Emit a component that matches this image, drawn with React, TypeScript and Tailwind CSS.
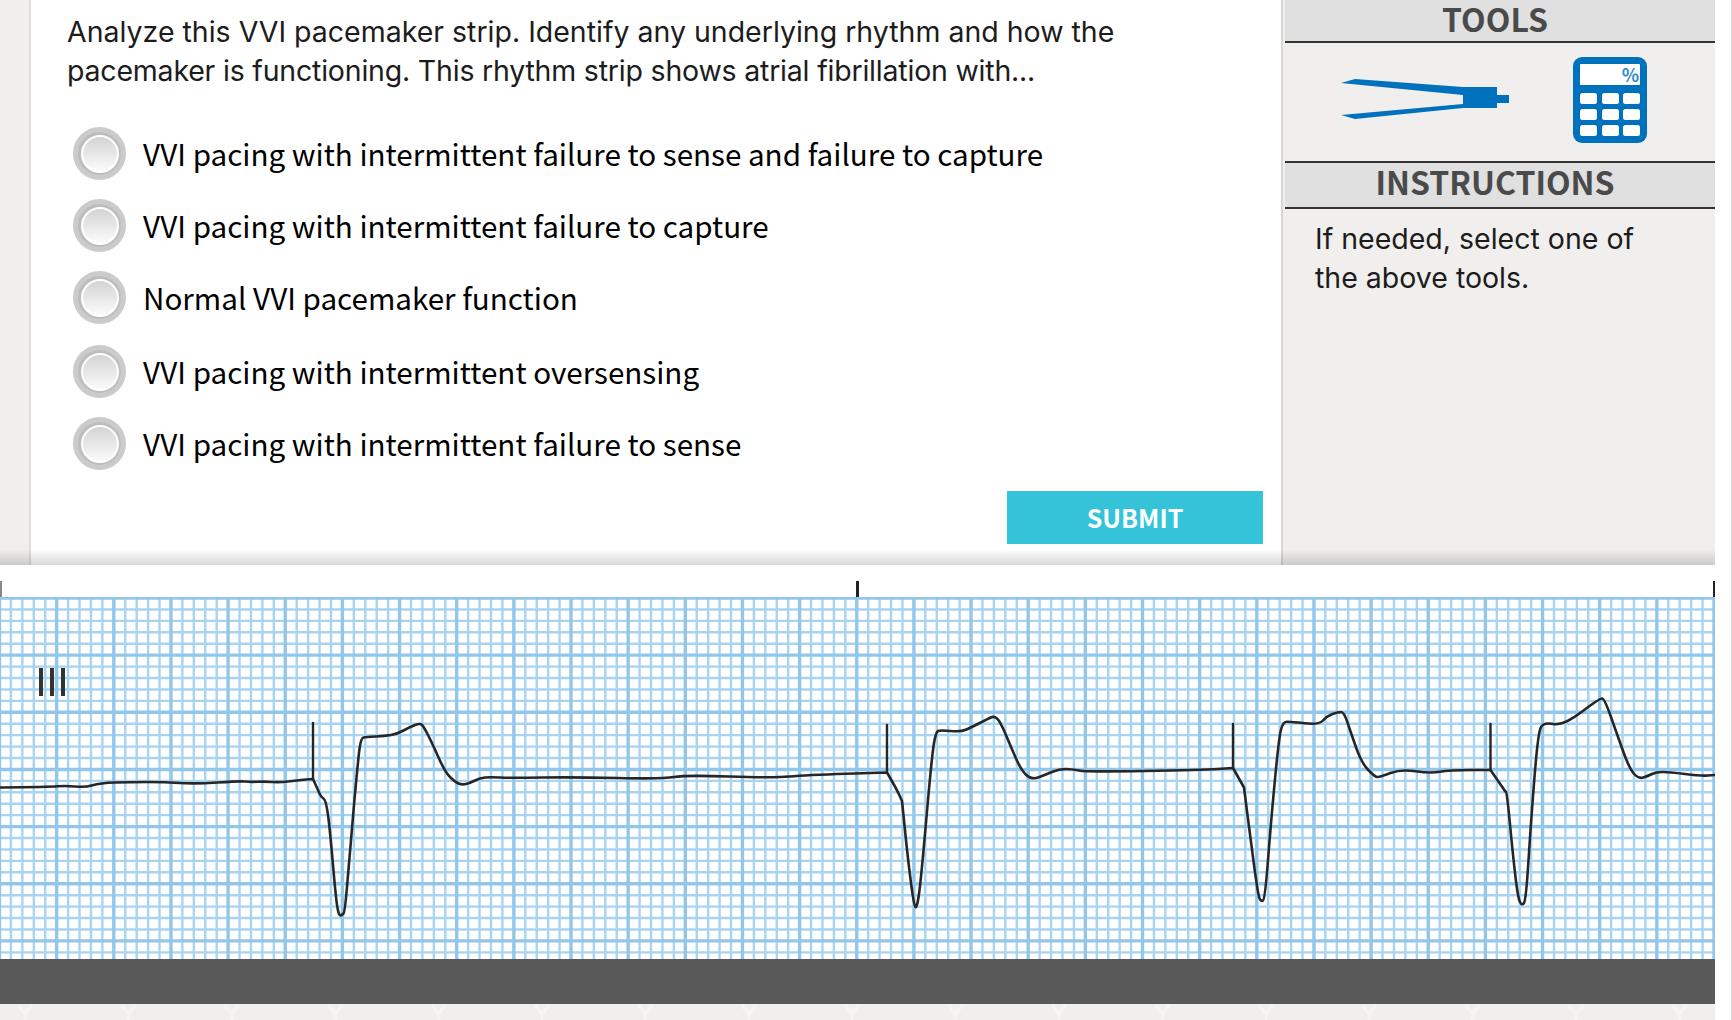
import React from "react";

const OPTIONS = [
  "VVI pacing with intermittent failure to sense and failure to capture",
  "VVI pacing with intermittent failure to capture",
  "Normal VVI pacemaker function",
  "VVI pacing with intermittent oversensing",
  "VVI pacing with intermittent failure to sense",
];

const TRACE: [number, number][] = [
  [0,787.5],[50,787],[65,785.5],[85,787.5],[100,783],[130,782],[165,782],[195,784],[240,781],[250,782],[265,781.5],[280,782.5],[300,780],[313,779],[313,779],
  [318,790],[321,797],[326,800],[330,830],[336,900],[339,916],[342,915],[345,912],[350,850],[358,760],[361,738],[366,737],[385,736],[397,734],[410,727],[420,723],[424,727],[433,745],[445,772],[455,782],[462,785],[470,783],[480,778],[490,777],[510,778],[574,777],[663,779],[685,775],[773,778],[806,775],[887,772.5],[887,772.5],
  [897,790],[902,801],[902,801],[908,860],[914,906],[917,908],[921,880],[932,754],[936,732],[940,730],[961,732],[972,727],[987.5,719],[994,716],[1000,721],[1011,747],[1021,770],[1031.5,780],[1046,774.5],[1059,769],[1072,769],[1086,772],[1202,770],[1233,768],[1233,768],
  [1244,787.5],[1244,787.5],[1250,835],[1258,894.6],[1261,902],[1265,899],[1271,821],[1279,737],[1283,722],[1290,721.6],[1319,725],[1327,716],[1338,712],[1344,712],[1351,733],[1361.5,763],[1375,777],[1380,777],[1401,769],[1430.5,773.5],[1449,770],[1490.5,770],[1490.5,770],
  [1505,791],[1505,791],[1507,793],[1513,856],[1518,898],[1522,906],[1526,900],[1531,821],[1538,733],[1543.5,722],[1563,726],[1600,698],[1604.5,699],[1616,731],[1629,768],[1638.5,779],[1648,776],[1656,772],[1669,772],[1701,776],[1715,775],
];

const STRIP_TOP = 597;

function smoothPath(pts: [number, number][]) {
  const p = pts.map(([x, y]) => [x, y - STRIP_TOP]);
  let d = `M${p[0][0]} ${p[0][1]}`;
  for (let i = 1; i < p.length - 1; i++) {
    const mx = (p[i][0] + p[i + 1][0]) / 2;
    const my = (p[i][1] + p[i + 1][1]) / 2;
    d += `Q${p[i][0]} ${p[i][1]} ${mx} ${my}`;
  }
  const last = p[p.length - 1];
  return `${d}L${last[0]} ${last[1]}`;
}

function Radio() {
  return (
    <div className="flex h-[53px] w-[53px] shrink-0 items-center justify-center rounded-full bg-[#cbcbcb]">
      <div className="flex h-[43px] w-[43px] items-center justify-center rounded-full bg-[#bdbdbd]">
        <div className="h-[38px] w-[38px] rounded-full border-2 border-white bg-linear-to-b from-[#d4d4d4] to-[#fbfbfb]" />
      </div>
    </div>
  );
}

function Caliper() {
  return (
    <svg width="168" height="42" viewBox="0 0 168 42" className="shrink-0">
      <path
        d="M0 4 L14 0 L122 8 L156 8 L156 16 L168 16 L168 24 L156 24 L156 29 L122 29 L14 40 L0 36 L122 25 L122 16 Z"
        fill="#0071bc"
      />
    </svg>
  );
}

function Calculator() {
  const cols = [7, 29, 50];
  const rows = [36, 52, 68];
  return (
    <svg width="74" height="86" viewBox="0 0 74 86" className="shrink-0">
      <rect width="74" height="86" rx="9" fill="#0071bc" />
      <rect x="7" y="7" width="60" height="21" rx="1" fill="#fff" />
      <text x="66" y="25" textAnchor="end" fontSize="18" fontWeight="700" fill="#2f8ccb" fontFamily="'Noto Sans CJK SC', sans-serif">%</text>
      {rows.map((y) =>
        cols.map((x) => <rect key={`${x}-${y}`} x={x} y={y} width="17" height="11" rx="2.5" fill="#fff" />)
      )}
    </svg>
  );
}

const STEP = 57.15 / 5;

function gridPath(width: number, height: number, major: boolean) {
  let d = "";
  for (let i = 0; i * STEP <= width; i++) {
    if ((i % 5 === 0) === major) d += `M${(i * STEP - 0.5).toFixed(2)} 0V${height}`;
  }
  for (let i = 0; i * STEP <= height; i++) {
    if ((i % 5 === 0) === major) d += `M0 ${(i * STEP + 1).toFixed(2)}H${width}`;
  }
  return d;
}

function Grid() {
  const height = 362;
  const width = 1715;
  return (
    <svg width={width} height={height} viewBox={`0 0 ${width} ${height}`} className="block">
      <rect width={width} height={height} fill="#fff" />
      <path d={gridPath(width, height, false)} stroke="#a9d4f1" strokeWidth="2.4" fill="none" />
      <path d={gridPath(width, height, true)} stroke="#93c7ea" strokeWidth="3.4" fill="none" />
      <rect x={width - 2} width="2" height={height} fill="#93c7ea" />
      {[39, 50, 61].map((x) => (
        <rect key={x} x={x} y={71} width="4" height="28" fill="#333" />
      ))}
      <g fill="none" stroke="#262626" strokeLinejoin="round" strokeLinecap="round">
        <path strokeWidth="2.6" d={smoothPath(TRACE)} />
        <path strokeWidth="2.4" d={`M313 ${723 - STRIP_TOP}V${779 - STRIP_TOP}M887 ${725 - STRIP_TOP}V${772 - STRIP_TOP}M1233 ${724 - STRIP_TOP}V${768 - STRIP_TOP}M1490.5 ${724 - STRIP_TOP}V${770 - STRIP_TOP}`} />
      </g>
    </svg>
  );
}

function Footer() {
  return (
    <svg width="1715" height="16" viewBox="0 0 1715 16" className="block">
      <defs>
        <pattern id="vee" width="103.4" height="16" patternUnits="userSpaceOnUse">
          <path d="M18 1L25 10V16M32 1L25 10" stroke="#f6f5f3" strokeWidth="3" fill="none" />
        </pattern>
      </defs>
      <rect width="1715" height="16" fill="#f0efed" />
      <rect width="1715" height="16" fill="url(#vee)" />
    </svg>
  );
}

const QUESTION = "font-['Inter','Liberation_Sans',sans-serif] text-[#1c1c1c]";
const SOURCE = "font-['Noto_Sans_CJK_SC','Noto_Sans',sans-serif]";

export default function App() {
  return (
    <div className="flex h-[1020px] w-[1732px] overflow-hidden bg-white">
      <div className="flex w-[1715px] shrink-0 flex-col">
        <div className="relative flex h-[565px] shrink-0">
          <div className="w-[31px] shrink-0 border-r-2 border-[#dedddb] bg-[#f0efed]" />
          <div className="w-[1250px] shrink-0 pl-[36px] pr-[18px] pt-[12px]">
            <p className={`${QUESTION} w-[1100px] text-[28.5px] leading-[39px]`}>
              Analyze this VVI pacemaker strip. Identify any underlying rhythm and how the{" "}
              <span className="tracking-[-0.2px]">pacemaker is functioning. This rhythm strip shows atrial fibrillation with...</span>
            </p>
            <div className="mt-[37px] flex flex-col gap-[19px]">
              {OPTIONS.map((o, i) => (
                <div key={o} className={`flex items-center gap-[17px] pl-[6px] ${i === 3 ? "mt-[2px]" : ""}`}>
                  <Radio />
                  <span className={`${SOURCE} text-[29.6px] leading-[40px] text-black`}>{o}</span>
                </div>
              ))}
            </div>
            <div className="mt-[21px] flex justify-end">
              <button className={`${SOURCE} flex h-[53px] w-[256px] items-center justify-center bg-[#34c3d9] text-[25px] font-bold text-white`}>
                SUBMIT
              </button>
            </div>
          </div>
          <aside className="flex w-[434px] shrink-0 flex-col border-l-2 border-[#d8d7d5] bg-[#f0efed]">
            <h2 className={`${SOURCE} ml-[2px] h-[41px] bg-[#e0e0e0] pr-[10px] text-center text-[32px] font-bold leading-[37px] text-[#4a4a4a]`}>TOOLS</h2>
            <div className="ml-[2px] h-[2px] bg-[#333]" />
            <div className="flex h-[118px] items-center gap-[64px] pb-[4px] pl-[58px]">
              <Caliper />
              <Calculator />
            </div>
            <div className="ml-[2px] h-[2px] bg-[#333]" />
            <h2 className={`${SOURCE} ml-[2px] h-[44px] bg-[#e0e0e0] pr-[10px] text-center text-[32px] font-bold leading-[37px] text-[#4a4a4a]`}>INSTRUCTIONS</h2>
            <div className="ml-[2px] h-[2px] bg-[#333]" />
            <p className={`${QUESTION} pl-[32px] pr-[60px] pt-[10px] text-[28.5px] leading-[39px]`}>
              If needed, select one of the above tools.
            </p>
          </aside>
          <div className="pointer-events-none absolute inset-x-0 bottom-0 h-[16px] bg-linear-to-b from-transparent to-black/15" />
        </div>
        <div className="relative flex h-[32px] shrink-0 items-end justify-between bg-white">
          <div className="h-[16px] w-[2px] bg-[#888]" />
          <div className="h-[16px] w-[3px] bg-[#222]" />
          <div className="h-[16px] w-[2px] bg-[#222]" />
        </div>
        <Grid />
        <div className="h-[45px] shrink-0 bg-[#595959]" />
        <Footer />
      </div>
      <div className="flex-1 border-r border-[#d8d8d8] bg-white" />
    </div>
  );
}
